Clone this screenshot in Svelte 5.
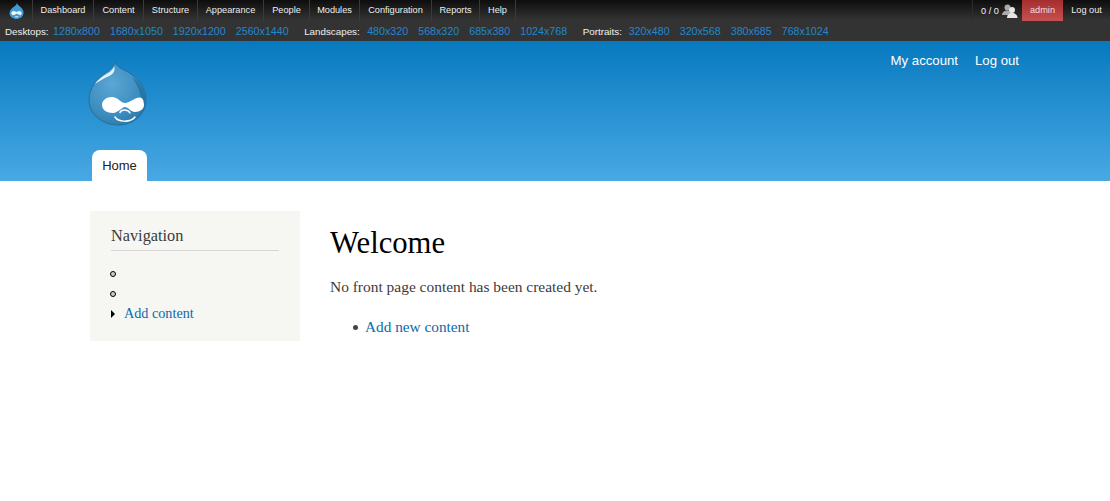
<script>
  const menu = [
    { label: 'Dashboard', width: 61 },
    { label: 'Content', width: 50 },
    { label: 'Structure', width: 54 },
    { label: 'Appearance', width: 66 },
    { label: 'People', width: 46 },
    { label: 'Modules', width: 50 },
    { label: 'Configuration', width: 72 },
    { label: 'Reports', width: 48 },
    { label: 'Help', width: 36 }
  ];
  const groups = [
    { label: 'Desktops:', width: 42, sizes: ['1280x800','1680x1050','1920x1200','2560x1440'] },
    { label: 'Landscapes:', width: 57, sizes: ['480x320','568x320','685x380','1024x768'] },
    { label: 'Portraits:', width: 40, sizes: ['320x480','320x568','380x685','768x1024'] }
  ];
</script>

<div class="toolbar">
  <nav class="admin">
    <a class="home" href="#top" aria-label="Home">
      <svg width="15" height="16" viewBox="0 0 15 16"><path d="M8 0c.5 2 2 2.500 4 4.500 2 2 2.800 4 2.500 6-.4 3-3.500 5.500-7 5.500S.6 13.500.5 10.500C.4 7.500 2.500 5.500 4.500 4 6 3 7.500 2 8 0z" fill="#3f9ad6"/><path d="M2.500 10.500c0-1.500 1.200-2.500 2.500-2.300 1 .2 1.700 1 2.500 1 .8 0 1.700-.9 2.700-.9 1.200 0 2.300 1 2.200 2.200-.1 1.200-1 1.500-2.100 1-.8-.4-1.800-1.200-2.800-1-.9.200-1.500 1-2.500 1.200-1.200.2-2.500-.2-2.500-1.200zM5.800 13.500c1.200.7 2.500.7 3.600 0" fill="#fff" stroke="#fff" stroke-width=".5"/></svg>
    </a>
    {#each menu as item}
      <a class="item" href="#top" style="width: {item.width}px">{item.label}</a>
    {/each}
    <div class="right">
      <span class="users">0 / 0
        <svg width="16" height="14" viewBox="0 0 16 14"><circle cx="5.500" cy="3.500" r="3" fill="#aaa"/><path d="M0 11c0-3 2-4.500 5.500-4.500S11 8 11 11z" fill="#aaa"/><circle cx="10" cy="6" r="3" fill="#e6e6e6"/><path d="M5 14c0-3 2-5 5-5s5.500 2 5.500 5z" fill="#e6e6e6"/></svg>
      </span>
      <a class="who" href="#top">admin</a>
      <a class="out" href="#top">Log out</a>
    </div>
  </nav>
  <div class="sizes">
    {#each groups as g}
      <div class="group">
        <span class="label" style="width: {g.width}px">{g.label}</span>
        {#each g.sizes as s}<a href="#top">{s}</a>{/each}
      </div>
    {/each}
  </div>
</div>

<header>
  <div class="head-top">
    <svg class="logo" width="60" height="66" viewBox="0 0 60 66">
      <defs>
        <radialGradient id="drop" cx="40%" cy="35%" r="70%">
          <stop offset="0" stop-color="#5ba6d4"/>
          <stop offset=".7" stop-color="#3c8ebf"/>
          <stop offset="1" stop-color="#2a7aa9"/>
        </radialGradient>
      </defs>
      <path d="M27 2C28 6 33 9 40 12C48 17 58 26 58 40C58 55 45 65 30 65C14 65 1 54 1 40C1 28 9 19 17 13C22 10 26 7 27 2z" fill="url(#drop)" stroke="#256f9f" stroke-width="1"/>
      <path d="M44 17c8 5 13 13 13 23 0 5-2 9-5 12 3-8 1-23-8-35z" fill="#1f6d9f" opacity=".7"/>
      <path d="M26 6c-1 5-6 7-12 11-3 2-6 5-7 7 4-3 8-5 12-7 5-2 9-5 7-11z" fill="#e4f3fb"/>
      <path d="M14 45c0-5 5-8.500 11-8 5 .5 8 6 12 6s11-6 15-5.500c3 .3 4 4 4 7.500 0 4-4 7-9 7-4 0-7-5-10-5-3 0-7 6-12 6-6 0-11-3-11-8z" fill="#fff"/>
      <path d="M27 57c3 5 15 6 20 0M32 52.500c1-3 8-4 10 .5" fill="none" stroke="#fff" stroke-width="1.500" stroke-linecap="round"/>
    </svg>
    <nav class="secondary">
      <a href="#top">My account</a>
      <a href="#top">Log out</a>
    </nav>
  </div>
  <a class="tab" href="#top">Home</a>
</header>

<main>
  <aside>
    <h2>Navigation</h2>
    <ul>
      <li class="leaf"></li>
      <li class="leaf"></li>
      <li class="col"><a href="#top">Add content</a></li>
    </ul>
  </aside>
  <section>
    <h1>Welcome</h1>
    <p>No front page content has been created yet.</p>
    <ul class="links"><li><a href="#top">Add new content</a></li></ul>
  </section>
</main>

<style>
  :global(body) { margin: 0; background: #fff; }
  a { text-decoration: none; }
  .toolbar { font-family: "Liberation Sans", sans-serif; background: #333; color: #eee; }
  .admin { display: flex; height: 21px; font-size: 9.200px; background: linear-gradient(#0d0d0d, #353535); }
  .home { width: 33px; display: flex; align-items: center; justify-content: center; border-right: 1px solid #3a3a3a; box-sizing: border-box; }
  .item { color: #eee; box-sizing: border-box; text-align: center; line-height: 21px; border-right: 1px solid #3a3a3a; }
  .right { margin-left: auto; display: flex; }
  .users { display: flex; align-items: center; gap: 3px; padding-left: 8px; border-left: 1px solid #2c2c2c; width: 50px; box-sizing: border-box; color: #eee; white-space: nowrap; }
  .who { width: 41px; text-align: center; background: linear-gradient(#a52d2d, #c75151); color: #f5dcdc; line-height: 21px; }
  .out { width: 47px; text-align: center; color: #eee; line-height: 21px; }
  .sizes { height: 20px; display: flex; padding-left: 5px; gap: 15.500px; align-items: center; }
  .group { display: flex; gap: 10px; align-items: baseline; }
  .label { color: #f0f0f0; font-size: 9.800px; margin-right: -4px; white-space: nowrap; }
  .sizes a { color: #1e88d2; font-size: 10.700px; }
  header { height: 140px; background: linear-gradient(#0779bf, #48a9e4); display: flex; flex-direction: column; padding-left: 92px; box-sizing: border-box; }
  .head-top { flex: 1; display: flex; justify-content: space-between; align-items: flex-start; padding-right: 91px; }
  .logo { margin: 19px 0 0 -4px; }
  .secondary { display: flex; gap: 17px; padding-top: 11px; font: 13.200px/17px "Liberation Sans", sans-serif; }
  .secondary a { color: #fff; }
  .tab { width: 55px; height: 31px; background: #fff; border-radius: 8px 8px 0 0; color: #222; font: 13px/31px "Liberation Sans", sans-serif; text-align: center; }
  main { display: flex; padding: 30px 0 0 90px; font-family: "Liberation Serif", serif; }
  aside { width: 210px; height: 130px; background: #f6f6f2; box-sizing: border-box; padding: 15px 21px 0; color: #3b3b3b; }
  h2 { margin: 0; font-size: 16.300px; font-weight: 400; line-height: 20px; padding-bottom: 4px; border-bottom: 1px solid #d6d6d6; }
  aside ul { list-style: none; margin: 12px 0 0; padding: 0; }
  aside li { height: 20px; position: relative; font-size: 14.200px; line-height: 20px; padding-left: 13px; }
  .leaf::before { content: ""; position: absolute; left: -1px; top: 8px; width: 4px; height: 4px; border: 1px solid #000; border-radius: 50%; background: #ccc; }
  .col::before { content: ""; position: absolute; left: 0; top: 7px; border-left: 4px solid #000; border-top: 4px solid transparent; border-bottom: 4px solid transparent; }
  aside a, .links a { color: #0a69ae; }
  section { padding-left: 30px; color: #3b3b3b; }
  h1 { margin: 14px 0 0; font-size: 30.700px; line-height: 36px; font-weight: 400; color: #000; }
  p { margin: 16px 0 0; font-size: 15.450px; line-height: 20px; }
  .links { list-style: none; margin: 20px 0 0; padding-left: 35px; font-size: 15.300px; line-height: 20px; }
  .links li { position: relative; }
  .links li::before { content: ""; position: absolute; left: -12px; top: 8px; width: 5px; height: 5px; border-radius: 50%; background: #444; }
</style>
